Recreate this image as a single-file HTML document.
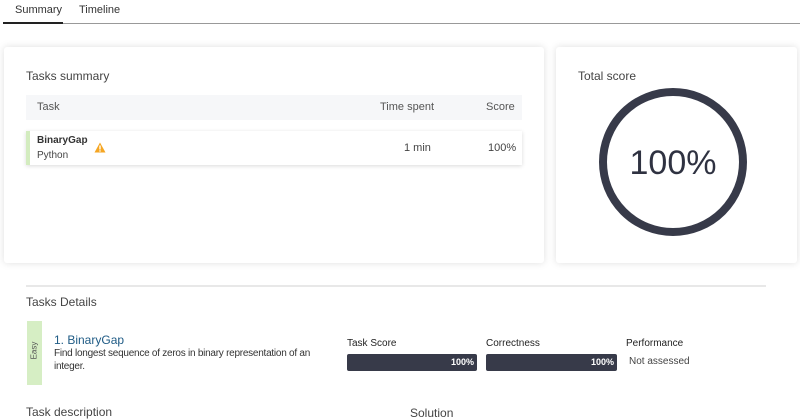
<!DOCTYPE html>
<html><head><style>
body{margin:0;width:800px;height:418px;overflow:hidden;background:#fff;font-family:"Liberation Sans",sans-serif;color:#333744;position:relative}
.a{position:absolute}
.card{position:absolute;background:#fff;border-radius:3px;box-shadow:0 0 8px rgba(0,0,0,.13)}
.t{font-size:11px;color:#333}
</style></head><body>
<div class="a t" style="left:15px;top:4px">Summary</div>
<div class="a t" style="left:79px;top:4px">Timeline</div>
<div class="a" style="left:3px;top:23px;width:797px;height:1px;background:#999"></div>
<div class="a" style="left:3px;top:22px;width:60px;height:2px;background:#222"></div>

<div class="card" style="left:4px;top:47px;width:540px;height:216px"></div>
<div class="a" style="left:26px;top:69px;font-size:12px;color:#444">Tasks summary</div>
<div class="a" style="left:26px;top:95px;width:496px;height:25px;background:#f6f7f9"></div>
<div class="a t" style="left:37px;top:101px;color:#555">Task</div>
<div class="a t" style="left:380px;top:101px;color:#555">Time spent</div>
<div class="a t" style="left:486px;top:101px;color:#555">Score</div>
<div class="a" style="left:26px;top:131px;width:496px;height:34px;background:#fff;box-shadow:0 1px 4px rgba(0,0,0,.15);border-left:4px solid #d3ecbf;box-sizing:border-box"></div>
<div class="a" style="left:37px;top:135px;font-size:10px;font-weight:bold;color:#333">BinaryGap</div>
<div class="a" style="left:37px;top:150px;font-size:10px;color:#444">Python</div>
<svg class="a" style="left:94px;top:142px" width="12" height="11" viewBox="0 0 12 11"><path d="M6 0.5L11.5 10.5H0.5Z" fill="#f5a623"/><rect x="5.3" y="3.5" width="1.4" height="4" fill="#fff"/><rect x="5.3" y="8.3" width="1.4" height="1.3" fill="#fff"/></svg>
<div class="a t" style="left:404px;top:142px;color:#444">1 min</div>
<div class="a t" style="left:488px;top:142px;color:#444">100%</div>

<div class="card" style="left:556px;top:47px;width:241px;height:216px"></div>
<div class="a" style="left:578px;top:69px;font-size:12px;color:#444">Total score</div>
<svg class="a" style="left:597px;top:86px" width="152" height="152"><circle cx="76" cy="76" r="70" fill="none" stroke="#373a49" stroke-width="8"/></svg>
<div class="a" style="left:597px;top:143px;width:152px;text-align:center;font-size:34px;color:#2f3241;line-height:40px">100%</div>

<div class="a" style="left:26px;top:285px;width:740px;height:2px;background:#e8e8e8"></div>
<div class="a" style="left:26px;top:295px;font-size:12px;color:#444">Tasks Details</div>
<div class="a" style="left:27px;top:321px;width:15px;height:64px;background:#d6eec4"></div>
<div class="a" style="left:18px;top:346px;width:32px;text-align:center;font-size:8px;color:#555;transform:rotate(-90deg)">Easy</div>
<div class="a" style="left:54px;top:333px;font-size:12px;color:#1f5b85">1. BinaryGap</div>
<div class="a" style="left:54px;top:347px;font-size:10px;color:#333;line-height:13px;width:275px;letter-spacing:-0.25px">Find longest sequence of zeros in binary representation of an integer.</div>
<div class="a" style="left:347px;top:338px;font-size:10px;color:#222">Task Score</div>
<div class="a" style="left:486px;top:338px;font-size:10px;color:#222">Correctness</div>
<div class="a" style="left:626px;top:338px;font-size:10px;color:#222">Performance</div>
<div class="a" style="left:347px;top:354px;width:130px;height:17px;background:#373a49;border-radius:2px;box-sizing:border-box;color:#fff;font-size:9px;font-weight:bold;text-align:right;padding-right:3px;line-height:17px">100%</div>
<div class="a" style="left:486px;top:354px;width:131px;height:17px;background:#373a49;border-radius:2px;box-sizing:border-box;color:#fff;font-size:9px;font-weight:bold;text-align:right;padding-right:3px;line-height:17px">100%</div>
<div class="a" style="left:629px;top:356px;font-size:10px;color:#444">Not assessed</div>
<div class="a" style="left:26px;top:405px;font-size:12px;color:#444">Task description</div>
<div class="a" style="left:410px;top:406px;font-size:12px;color:#444">Solution</div>
</body></html>
